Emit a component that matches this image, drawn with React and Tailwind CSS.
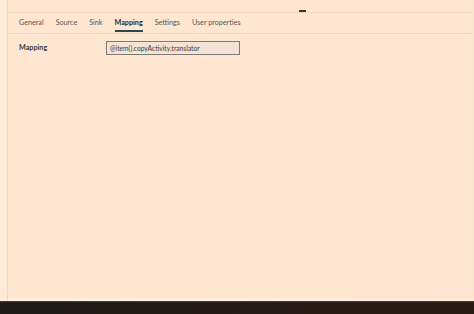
import React from "react";

const tabs = ["General", "Source", "Sink", "Mapping", "Settings", "User properties"];

export default function App() {
  return (
    <div
      className="w-[474px] h-[314px] flex flex-col bg-[#fee6d1] overflow-hidden"
      style={{ fontFamily: 'Lato, "Noto Sans", sans-serif' }}
    >
      <div className="flex-1 flex">
        {/* left gutter */}
        <div className="w-[8px] bg-[#ffe9d7] border-r border-[#f3d9c3]" />
        <div className="flex-1 flex flex-col border-r border-[#fbe4d2]">
          {/* top strip with splitter handle */}
          <div className="h-[13px] border-b border-[#f1d7c1] relative">
            <div className="absolute left-[291px] top-[10px] w-[7px] h-[2px] bg-[#3a3330]" />
          </div>
          {/* tabs */}
          <div className="h-[21px] flex items-start gap-[12px] pl-[11px] border-b border-[#f0d6c0] text-[7.2px] text-[#5a5654]">
            {tabs.map((t) => (
              <div
                key={t}
                className={
                  t === "Mapping"
                    ? "h-[19px] flex items-center pt-[4px] border-b-[2px] border-[#2f4650] font-bold text-[#2a2a2a]"
                    : "h-[19px] flex items-center pt-[4px] border-b-[2px] border-transparent"
                }
              >
                {t}
              </div>
            ))}
          </div>
          {/* mapping row */}
          <div className="flex items-center pl-[11px] pt-[7px]">
            <div className="w-[87px] text-[7.2px] font-bold text-[#3a3836]">Mapping</div>
            <div className="w-[134px] h-[14px] border border-[#7d7a78] bg-[#f2e3d6] flex items-center px-[3px] text-[6.7px] text-[#3a3836]">
              @item().copyActivity.translator
            </div>
          </div>
          <div className="flex-1" />
          <div className="h-[2px] bg-[#fbeee3]" />
        </div>
      </div>
      {/* bottom dark bar */}
      <div className="h-[13px] bg-gradient-to-r from-[#1e1b19] to-[#2b1b15] border-t border-[#4a3f38]" />
    </div>
  );
}
